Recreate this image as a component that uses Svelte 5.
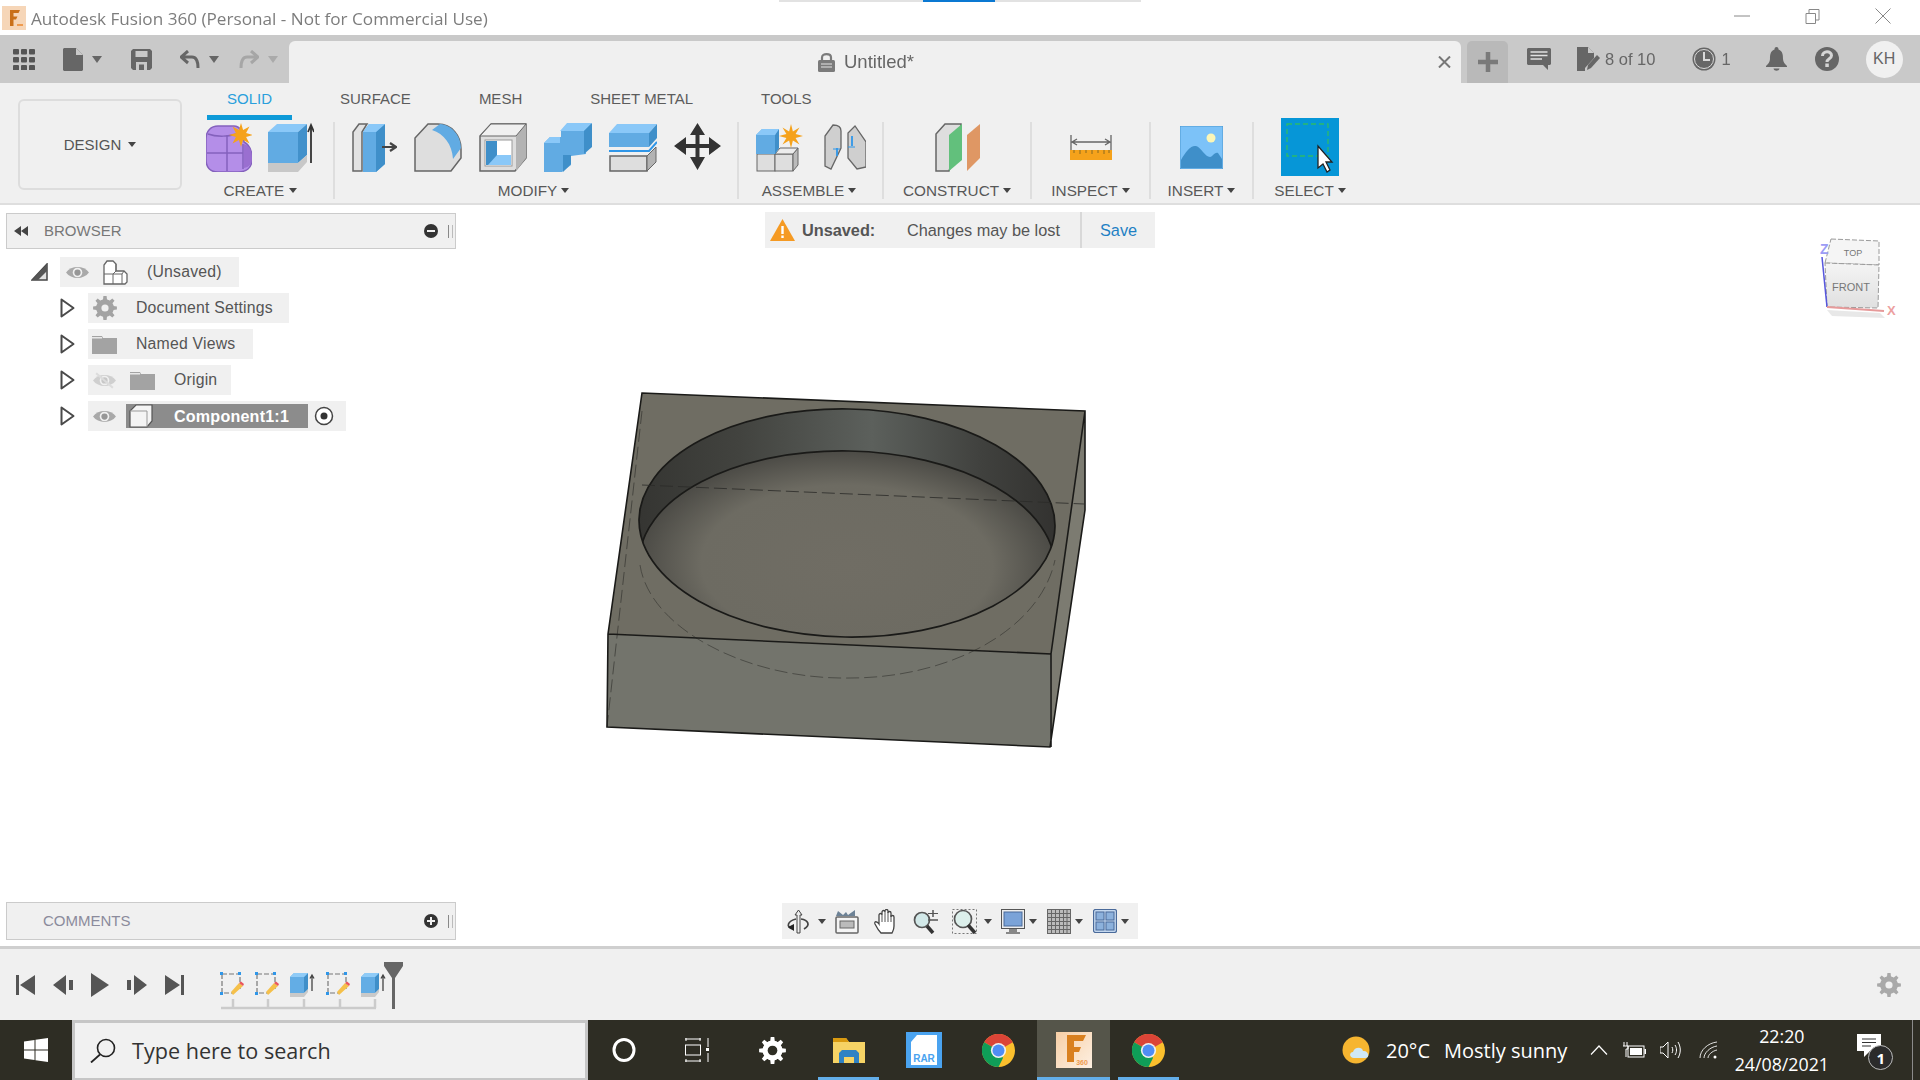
<script>
  const burst = (cx, cy, r1, r2, n) => {
    let pts = [];
    for (let i = 0; i < n * 2; i++) {
      const r = i % 2 ? r2 : r1;
      const a = (Math.PI * i) / n;
      pts.push(`${(cx + r * Math.sin(a)).toFixed(1)},${(cy - r * Math.cos(a)).toFixed(1)}`);
    }
    return pts.join(' ');
  };

  const gearPath = (c, r1, r2, teeth) => {
    let d = '';
    const step = (Math.PI * 2) / teeth;
    for (let i = 0; i < teeth; i++) {
      const a = i * step;
      const p = [
        [r1, a - step * 0.3],
        [r2, a - step * 0.17],
        [r2, a + step * 0.17],
        [r1, a + step * 0.3]
      ];
      p.forEach(([r, t], j) => {
        d += `${i === 0 && j === 0 ? 'M' : 'L'}${(c + r * Math.sin(t)).toFixed(1)} ${(c - r * Math.cos(t)).toFixed(1)}`;
      });
    }
    return d + 'Z';
  };

  const ribbonTabs = ['SOLID', 'SURFACE', 'MESH', 'SHEET METAL', 'TOOLS'];
  const taskSlots = ['cortana', 'taskview', 'settings', 'explorer', 'rar', 'chrome', 'fusion', 'chrome2'];
</script>

{#snippet gear(size, color)}
  <svg width={size} height={size} viewBox="0 0 24 24">
    <path d={gearPath(12, 8.6, 12, 8)} fill={color} />
    <circle cx="12" cy="12" r="8.8" fill={color} />
    <circle cx="12" cy="12" r="3.6" fill="#f0f0f0" />
  </svg>
{/snippet}

{#snippet eye(off)}
  <svg width="25" height="17" viewBox="0 0 24 16" class:faint={off}>
    <path d="M1 8C6 1 18 1 23 8C18 15 6 15 1 8Z" fill="#a9a9a9" />
    <circle cx="12" cy="8" r="4.6" fill="#f0f0f0" />
    <circle cx="12" cy="8" r="3" fill="#979797" />
    {#if off}<path d="M4 1L20 15" stroke="#c4c4c4" stroke-width="2" />{/if}
  </svg>
{/snippet}

{#snippet folder()}
  <svg width="25" height="20" viewBox="0 0 25 20">
    <path d="M0 2H10L11 4H25V20H0Z" fill="#a3a3a3" />
    <path d="M0 3H10V4.5H0Z" fill="#e8e8e8" />
  </svg>
{/snippet}

{#snippet chevron()}
  <svg class="chev" width="15" height="20" viewBox="0 0 15 20">
    <path d="M1.500 1.500L13.500 10L1.500 18.500Z" fill="#fff" stroke="#4a4a4a" stroke-width="2" stroke-linejoin="round" />
  </svg>
{/snippet}

{#snippet sketchIcon()}
  <svg width="24" height="24" viewBox="0 0 24 24">
    <path d="M2 2H20V17M2 2V21H13" fill="none" stroke="#777" stroke-width="1.2" stroke-dasharray="5 2" />
    <rect x="0" y="0" width="3" height="3" fill="#2f96e8" /><rect x="18" y="0" width="3" height="3" fill="#2f96e8" />
    <rect x="0" y="20" width="3" height="3" fill="#2f96e8" />
    <path d="M13 23L11 20L19 11L23 14Z" fill="#f5c04a" /><path d="M19 11L23 14L24 12L21 9.500Z" fill="#e9545c" />
  </svg>
{/snippet}

{#snippet extrudeSmall()}
  <svg width="25" height="25" viewBox="0 0 25 25">
    <path d="M0 5L4 1H18V18L14 21H0Z" fill="#63ade5" />
    <path d="M14 5L18 1V17L14 21Z" fill="#3f8fc9" /><path d="M0 5L4 1H18L14 5Z" fill="#8fcbf7" />
    <path d="M0 21H14L18 17V20L14 25H0Z" fill="#c9c9c9" />
    <path d="M22 19V4M20 6.500L22 3L24 6.500" fill="none" stroke="#444" stroke-width="1.300" />
  </svg>
{/snippet}

{#snippet chromeIcon()}
  <svg width="33" height="33" viewBox="0 0 33 33">
    <circle cx="16.500" cy="16.500" r="16.500" fill="#fbc02d" />
    <path d="M16.500 16.500L2.200 8.200A16.500 16.500 0 0 1 30.800 8.200Z" fill="#db4437" />
    <path d="M16.500 16.500L2.200 8.200A16.500 16.500 0 0 0 16.500 33L21 24Z" fill="#0f9d58" />
    <circle cx="16.500" cy="16.500" r="7.600" fill="#f1f1f1" />
    <circle cx="16.500" cy="16.500" r="6" fill="#4f8df5" />
  </svg>
{/snippet}

<div class="app">
  <div class="topstrip"><span></span></div>

  <header class="titlebar">
    <svg class="app-logo" width="24" height="24" viewBox="0 0 24 24">
      <rect width="24" height="24" fill="#f6d6b8" />
      <path d="M8 20V4H18L16.500 7H11.500V10.500H15.500L14 13.500H11.500V20Z" fill="#c9701a" />
      <rect x="15" y="18" width="6" height="2" fill="#ee9b50" />
    </svg>
    <span class="title">Autodesk Fusion 360 (Personal - Not for Commercial Use)</span>
    <div class="winctl">
      <svg width="16" height="16" viewBox="0 0 16 16"><path d="M0 8H16" stroke="#888" /></svg>
      <svg width="15" height="16" viewBox="0 0 15 16"><path d="M1 5.500H10.500V15.500H1ZM4 5V1.500H14V12H11" fill="none" stroke="#888" /></svg>
      <svg width="16" height="16" viewBox="0 0 16 16"><path d="M0.500 0.500L15.500 15.500M15.500 0.500L0.500 15.500" stroke="#888" /></svg>
    </div>
  </header>

  <div class="tabbar">
    <div class="qat">
      <svg width="22" height="21" viewBox="0 0 22 21" fill="#555">
        {#each [0, 8, 16] as y}{#each [0, 8, 16] as x}<rect {x} {y} width="6" height="5.500" rx="1" />{/each}{/each}
      </svg>
      <div class="tool">
        <svg width="20" height="23" viewBox="0 0 20 23"><path d="M1 0H13L20 7V22L19 23H1L0 22V1Z" fill="#666" /><path d="M13 0V7H20" fill="#c9c9c9" /></svg>
        <i class="caret big"></i>
      </div>
      <svg class="save" width="21" height="21" viewBox="0 0 21 21">
        <path d="M2 0H19L21 2V19L19 21H2L0 19V2Z" fill="#666" />
        <rect x="4.500" y="2" width="12" height="6" fill="#c9c9c9" /><path d="M5 21V13H16V21H13V15.500H8V21Z" fill="#c9c9c9" />
      </svg>
      <div class="tool">
        <svg width="20" height="18" viewBox="0 0 20 18"><path d="M8 1L1 7L8 13M2 7H12C16 7 18 10 18 18" fill="none" stroke="#666" stroke-width="3" /></svg>
        <i class="caret big"></i>
      </div>
      <div class="tool redo">
        <svg width="20" height="18" viewBox="0 0 20 18"><path d="M12 1L19 7L12 13M18 7H8C4 7 2 10 2 18" fill="none" stroke="#a6a6a6" stroke-width="3" /></svg>
        <i class="caret big light"></i>
      </div>
    </div>

    <div class="doc-tab">
      <svg width="17" height="20" viewBox="0 0 17 20">
        <path d="M4 9V5.500C4 1 13 1 13 5.500V9" fill="none" stroke="#7b7b7b" stroke-width="2.200" />
        <rect y="8" width="17" height="12" rx="1.500" fill="#7b7b7b" />
        <path d="M3 12H14M3 15H14" stroke="#e6e6e6" />
      </svg>
      <span class="doc-name">Untitled*</span>
      <svg class="doc-close" width="13" height="12" viewBox="0 0 13 12"><path d="M1 0.500L12 11.500M12 0.500L1 11.500" stroke="#777" stroke-width="2" /></svg>
    </div>

    <div class="account">
      <div class="new-tab">
        <svg width="20" height="20" viewBox="0 0 20 20"><path d="M10 0V20M0 10H20" stroke="#7a7a7a" stroke-width="4.500" /></svg>
      </div>
      <svg class="a-comment" width="24" height="22" viewBox="0 0 24 22">
        <path d="M1 0H23L24 1V16L23 17H21V22L16 17H1L0 16V1Z" fill="#666" />
        <path d="M3.500 4H20.500M3.500 7.500H20.500M3.500 11H15" stroke="#e0e0e0" stroke-width="1.500" />
      </svg>
      <svg class="a-doc" width="23" height="24" viewBox="0 0 23 24">
        <path d="M0 0H11L17 6V11L8 21V24H0Z" fill="#666" /><path d="M11 0V6H17" fill="#c9c9c9" />
        <path d="M10 23L11 18L20 8L23 11L14 21Z" fill="#666" />
      </svg>
      <span class="a-count">8 of 10</span>
      <svg class="a-clock" width="24" height="24" viewBox="0 0 24 24">
        <circle cx="12" cy="12" r="11.500" fill="#666" />
        <circle cx="12" cy="12" r="9.500" fill="none" stroke="#d8d8d8" />
        <path d="M12 5V13H18" fill="none" stroke="#d8d8d8" stroke-width="2" />
      </svg>
      <span class="a-one">1</span>
      <svg class="a-bell" width="21" height="24" viewBox="0 0 21 24">
        <path d="M10.500 0C12 0 12.500 1 12.500 2.500C17 4 17 9 17 12C17 15 19 17 21 19V20H0V19C2 17 4 15 4 12C4 9 4 4 8.500 2.500C8.500 1 9 0 10.500 0Z" fill="#666" />
        <path d="M7.500 21.500H13.500C13 24.500 8 24.500 7.500 21.500Z" fill="#666" />
      </svg>
      <svg class="a-help" width="24" height="24" viewBox="0 0 24 24">
        <circle cx="12" cy="12" r="12" fill="#666" />
        <path d="M7.500 9C7.500 3.500 16.500 3.500 16.500 8.500C16.500 12 12 11.500 12 15" fill="none" stroke="#d5d5d5" stroke-width="3" />
        <rect x="10.300" y="16.500" width="3.500" height="3.500" fill="#d5d5d5" />
      </svg>
      <div class="avatar">KH</div>
    </div>
  </div>

  <div class="ribbon">
    <button class="design">DESIGN <i class="caret"></i></button>
    <div class="ribbon-main">
      <nav class="tabs">
        {#each ribbonTabs as t, i}
          <span class="tab" class:active={i === 0}>{t}</span>
        {/each}
      </nav>
      <div class="groups">
        <section class="group g-create">
          <div class="icons">
            <svg width="46" height="50" viewBox="0 0 46 50">
              <path d="M12 4H28C34 4 37 9 38 20C44 23 46 28 46 37C46 46 40 50 32 50H12C4 50 0 46 0 37V17C0 9 5 4 12 4Z" fill="#b48ee8" stroke="#8461bd" stroke-width="1.500" />
              <path d="M2 12C10 15 24 15 33 11M21 13V49M1 31H37M37 22V47" fill="none" stroke="#8461bd" stroke-width="1.500" />
              <path d="M38 22C44 24 46 29 46 37C46 42 43 45 38 46Z" fill="#9a6fd0" />
              <polygon points={burst(35, 13, 12, 5.500, 8)} fill="#f5a21b" />
            </svg>
            <svg width="46" height="50" viewBox="0 0 46 50">
              <path d="M0 10L9 2H39L30 10Z" fill="#8ac8f8" /><rect y="10" width="30" height="31" fill="#61abe3" />
              <path d="M30 10L39 2V33L30 41Z" fill="#4291cb" />
              <path d="M0 41H30L39 33V40L30 50H0Z" fill="#c8c8c8" />
              <path d="M43 41V5M40 10L43 3L46 10" fill="none" stroke="#333" stroke-width="1.800" />
            </svg>
          </div>
          <div class="label">CREATE <i class="caret"></i></div>
        </section>

        <section class="group g-modify">
          <div class="icons">
            <svg width="45" height="50" viewBox="0 0 45 50">
              <path d="M1 49V10L7 2H15L10 10V49Z" fill="#e2e2e2" stroke="#666" stroke-width="1.500" />
              <path d="M11 10L17 2H33V42L24 50H11Z" fill="#61abe3" /><path d="M24 10L33 2V42L24 50Z" fill="#3f8fc9" />
              <path d="M11 10L17 2H33L24 10Z" fill="#8ac8f8" />
              <path d="M30 25H42M38 21L44 25L38 29" fill="none" stroke="#444" stroke-width="2.200" />
            </svg>
            <svg width="48" height="50" viewBox="0 0 48 50">
              <path d="M1 49V16L14 2H24C38 2 47 14 47 27V36L37 49Z" fill="#dedede" stroke="#666" stroke-width="1.500" />
              <path d="M18 8L26 2C38 3 47 14 47 26L39 37C38 22 30 12 18 8Z" fill="#61abe3" />
            </svg>
            <svg width="48" height="50" viewBox="0 0 48 50">
              <path d="M1 49V14L12 2H47V36L36 49Z" fill="#dedede" stroke="#666" stroke-width="1.500" />
              <path d="M37 14L47 2V36L37 49Z" fill="#b3b3b3" /><path d="M1 14L12 2H47L37 14Z" fill="#f0f0f0" stroke="#666" />
              <rect x="6" y="18" width="27" height="26" fill="#fff" stroke="#9a9a9a" />
              <path d="M7 19H18V33H32V43H7Z" fill="#3f8fc9" /><path d="M18 33H32V43H9Z" fill="#8ac8f8" />
            </svg>
            <svg width="48" height="50" viewBox="0 0 48 50">
              <path d="M0 21L6 15H17V9L23 2H48L42 8V32L27 34V43L18 50H0Z" fill="#61abe3" />
              <path d="M16 9L23 1H48L40 9Z" fill="#8ac8f8" /><path d="M0 21L6 15H16L16 21Z" fill="#8ac8f8" />
              <path d="M40 9L48 1V25L40 32Z" fill="#3f8fc9" /><path d="M19 33L27 33V42L19 50Z" fill="#3f8fc9" />
            </svg>
            <svg width="48" height="50" viewBox="0 0 48 50">
              <path d="M0 11L8 2H48L40 11Z" fill="#8ac8f8" /><rect y="11" width="40" height="14" fill="#61abe3" /><path d="M40 11L48 2V16L40 25Z" fill="#3f8fc9" />
              <path d="M0 29H40L48 20" fill="none" stroke="#2f96e8" stroke-width="2" />
              <path d="M1 34H38V49H1Z" fill="#dedede" stroke="#666" stroke-width="1.500" /><path d="M38 34L47 25V40L38 49Z" fill="#b3b3b3" stroke="#666" />
            </svg>
            <svg width="47" height="50" viewBox="0 0 47 50">
              <path d="M23.500 1L31 13H25.500V22H35V15L47 24L35 33V26H25.500V35H31L23.500 48L16 35H21.500V26H12V33L0 24L12 15V22H21.500V13H16Z" fill="#333" />
            </svg>
          </div>
          <div class="label mod">MODIFY <i class="caret"></i></div>
        </section>

        <section class="group g-assemble">
          <div class="icons">
            <svg width="47" height="50" viewBox="0 0 47 50">
              <rect x="1" y="32" width="18" height="17" fill="#dedede" stroke="#666" /><rect x="19" y="32" width="18" height="17" fill="#dedede" stroke="#666" />
              <path d="M37 32L42 26V43L37 49Z" fill="#bbb" stroke="#666" /><path d="M19 32L24 26H42L37 32Z" fill="#ececec" stroke="#666" />
              <path d="M0 13L6 7H23V26L19 32H0Z" fill="#61abe3" /><path d="M19 13L23 7V26L19 32Z" fill="#3f8fc9" /><path d="M0 13L6 7H23L19 13Z" fill="#8ac8f8" />
              <polygon points={burst(35, 14, 12, 5, 8)} fill="#f5a21b" />
            </svg>
            <svg width="42" height="50" viewBox="0 0 42 50">
              <path d="M1 44V14L9 3C14 3 17 5 17 9V26L7 47Z" fill="#cfcfcf" stroke="#666" stroke-width="1.300" />
              <path d="M24 26V11L31 4L42 20V45L33 47L24 36Z" fill="#cfcfcf" stroke="#666" stroke-width="1.300" />
              <path d="M13 26V34M28 14V24" stroke="#2f96e8" stroke-width="1.800" /><path d="M9 27H16M24 25H31" stroke="#2f96e8" />
            </svg>
          </div>
          <div class="label asm">ASSEMBLE <i class="caret"></i></div>
        </section>

        <section class="group g-construct">
          <div class="icons">
            <svg width="45" height="50" viewBox="0 0 45 50">
              <path d="M1 49V12L10 2H26V12L14 49Z" fill="#dedede" stroke="#666" stroke-width="1.500" />
              <path d="M14 49V13L27 2V38Z" fill="#62c07c" />
              <path d="M32 49V13L45 2V36Z" fill="#df9764" />
            </svg>
          </div>
          <div class="label">CONSTRUCT <i class="caret"></i></div>
        </section>

        <section class="group g-inspect">
          <div class="icons">
            <svg width="42" height="25" viewBox="0 0 42 25">
              <path d="M1 0V15M41 0V15M2 7H40M7 4L2 7L7 10M35 4L40 7L35 10" fill="none" stroke="#666" stroke-width="1.300" />
              <rect y="15" width="42" height="10" fill="#f5a21b" />
              <path d="M4 15V18M10 15V19M16 15V18M22 15V19M28 15V18M34 15V19M39 15V18" stroke="#8a6a20" />
            </svg>
          </div>
          <div class="label">INSPECT <i class="caret"></i></div>
        </section>

        <section class="group g-insert">
          <div class="icons">
            <svg width="43" height="43" viewBox="0 0 43 43">
              <rect width="43" height="43" fill="#7cc2f8" stroke="#4a97cf" />
              <circle cx="31" cy="12" r="4.500" fill="#fbf6b7" />
              <path d="M1 34C6 25 11 19 16 20C21 21 25 31 30 31C33 31 34 26 38 27L42 33V42H1Z" fill="#3f8fc9" />
            </svg>
          </div>
          <div class="label">INSERT <i class="caret"></i></div>
        </section>

        <section class="group g-select">
          <div class="icons">
            <svg width="58" height="58" viewBox="0 0 58 58">
              <rect width="58" height="58" fill="#0696d7" />
              <rect x="6" y="6" width="41" height="32" fill="none" stroke="#2dbb6a" stroke-width="1.300" stroke-dasharray="5 3" />
              <path d="M37 28V50L42 46L46 54L49 52L45 44H51Z" fill="#fff" stroke="#222" stroke-width="1.300" />
            </svg>
          </div>
          <div class="label">SELECT <i class="caret"></i></div>
        </section>
      </div>
    </div>
  </div>

  <main class="canvas">
    <aside class="side">
      <div class="panel">
        <svg width="14" height="10" viewBox="0 0 14 10"><path d="M7 0V10L0 5ZM14 0V10L7 5Z" fill="#444" /></svg>
        <span class="panel-title">BROWSER</span>
        <svg class="panel-btn" width="14" height="14" viewBox="0 0 14 14"><circle cx="7" cy="7" r="7" fill="#333" /><path d="M3 7H11" stroke="#f0f0f0" stroke-width="2" /></svg>
        <i class="grip"></i>
      </div>

      <div class="tree">
        <div class="row root">
          <svg class="open" width="17" height="18" viewBox="0 0 17 18"><path d="M1 17L16 1V17Z" fill="#e0e0e0" stroke="#444" stroke-width="1.500" /><path d="M1 17L16 1V8L7 17Z" fill="#555" /></svg>
          <div class="node n-root">
            {@render eye(false)}
            <svg width="25" height="25" viewBox="0 0 25 25">
              <path d="M1 24V5L4 1H10L13 4V11H21L24 14V22L22 24Z" fill="#fff" stroke="#666" stroke-width="1.300" />
              <path d="M13 11L10 14H1M10 14V24M13 11V4L10 1M21 11L19 14H10M19 14V24" fill="none" stroke="#666" />
            </svg>
            <span class="n-text">(Unsaved)</span>
          </div>
        </div>
        <div class="row">
          {@render chevron()}
          <div class="node n-doc">
            {@render gear(24, '#a3a3a3')}
            <span class="n-text">Document Settings</span>
          </div>
        </div>
        <div class="row">
          {@render chevron()}
          <div class="node n-views">
            {@render folder()}
            <span class="n-text">Named Views</span>
          </div>
        </div>
        <div class="row">
          {@render chevron()}
          <div class="node n-origin">
            {@render eye(true)}
            {@render folder()}
            <span class="n-text">Origin</span>
          </div>
        </div>
        <div class="row">
          {@render chevron()}
          <div class="node n-comp">
            {@render eye(false)}
            <div class="selected">
              <svg width="24" height="24" viewBox="0 0 24 24"><path d="M1 23V7L7 1H23V17L18 23Z" fill="#f4f4f4" stroke="#555" stroke-width="1.200" /><path d="M1 7H18V23" fill="none" stroke="#999" /></svg>
              <span>Component1:1</span>
            </div>
            <svg class="radio" width="20" height="20" viewBox="0 0 20 20"><circle cx="10" cy="10" r="8.500" fill="#fff" stroke="#444" stroke-width="1.500" /><circle cx="10" cy="10" r="3.500" fill="#333" /></svg>
          </div>
        </div>
      </div>

      <div class="panel comments">
        <span class="panel-title">COMMENTS</span>
        <svg class="panel-btn" width="14" height="14" viewBox="0 0 14 14"><circle cx="7" cy="7" r="7" fill="#333" /><path d="M3 7H11M7 3V11" stroke="#f0f0f0" stroke-width="2" /></svg>
        <i class="grip"></i>
      </div>
    </aside>

    <div class="banner">
      <svg width="25" height="22" viewBox="0 0 25 22"><path d="M12.500 0L25 22H0Z" fill="#f59a23" /><path d="M12.500 7V15M12.500 16.500V19" stroke="#fff" stroke-width="2.400" /></svg>
      <b>Unsaved:</b>
      <span class="lost">Changes may be lost</span>
      <span class="save-link">Save</span>
    </div>

    <svg class="model" width="500" height="375" viewBox="600 385 500 375">
      <defs>
        <clipPath id="rim"><ellipse cx="847" cy="523" rx="208" ry="114" transform="rotate(1 847 523)" /></clipPath>
        <linearGradient id="wall" x1="0" x2="1" y1="0" y2="0">
          <stop offset="0" stop-color="#343431" /><stop offset=".25" stop-color="#42433f" /><stop offset=".55" stop-color="#5c605c" /><stop offset=".8" stop-color="#40413e" /><stop offset="1" stop-color="#302f2d" />
        </linearGradient>
        <radialGradient id="floor" cx=".5" cy=".5" r=".5">
          <stop offset="0" stop-color="#706d64" /><stop offset=".7" stop-color="#6d6b62" /><stop offset="1" stop-color="#4c4b46" />
        </radialGradient>
      </defs>
      <path d="M642 393L1085 411L1051 654L608 634Z" fill="#6f6d63" />
      <path d="M608 634L1051 654L1050 747L607 727Z" fill="#73746c" />
      <path d="M1085 411V510L1050 747L1051 654Z" fill="#7c7b71" />
      <g clip-path="url(#rim)">
        <rect x="630" y="400" width="440" height="240" fill="url(#wall)" />
        <ellipse cx="847" cy="565" rx="208" ry="114" transform="rotate(1 847 565)" fill="url(#floor)" stroke="#1a1a18" stroke-width="1.700" />
      </g>
      <ellipse cx="847" cy="523" rx="208" ry="114" transform="rotate(1 847 523)" fill="none" stroke="#1a1a18" stroke-width="1.700" />
      <g fill="none" stroke="#2b2b28" stroke-dasharray="13 5">
        <path d="M642 485L1084 504" stroke-opacity=".8" />
        <path d="M642 411L607 727" stroke-opacity=".6" />
        <path d="M640 565C650 630 750 680 850 678C950 678 1040 630 1055 560" stroke-opacity=".55" />
      </g>
      <path d="M642 393L1085 411V510L1050 747L607 727L608 634ZM608 634L1051 654V747M642 393L608 634M1085 411L1051 654" fill="none" stroke="#1a1a18" stroke-width="1.600" />
    </svg>

    <div class="cube">
      <svg width="100" height="90" viewBox="1815 235 100 90">
        <defs>
          <linearGradient id="cf" x1="0" x2="0" y1="0" y2="1"><stop offset="0" stop-color="#f4f4f4" /><stop offset="1" stop-color="#e0e0e0" /></linearGradient>
        </defs>
        <path d="M1827 310L1880 313L1885 318L1832 316Z" fill="#d8d8d8" opacity=".6" />
        <path d="M1831 239L1879 241V265L1825 263Z" fill="#f5f5f5" stroke="#9a9a9a" stroke-dasharray="5 2" />
        <path d="M1825 263L1879 265L1878 308L1827 307Z" fill="url(#cf)" stroke="#9a9a9a" stroke-dasharray="5 2" />
        <text x="1853" y="256" class="c-top">TOP</text>
        <text x="1851" y="291" class="c-front">FRONT</text>
        <path d="M1822 257L1827 307" stroke="#5656dd" stroke-width="1.500" />
        <path d="M1827 307L1884 311" stroke="#e69a9a" stroke-width="2" />
        <text x="1820" y="254" class="c-z">Z</text>
        <text x="1887" y="315" class="c-x">X</text>
      </svg>
    </div>

    <div class="viewbar">
      <div class="tool">
        <svg width="25" height="25" viewBox="0 0 25 25"><path d="M12.500 1L9 6H11V24H14V6H16Z" fill="#eee" stroke="#444" /><path d="M10 10C2 12 -1 18 7 20M15 10C22 11 25 16 18 20" fill="none" stroke="#444" stroke-width="1.700" /><path d="M2 18L8 15V22Z" fill="#222" /></svg>
        <i class="caret"></i>
      </div>
      <svg class="vb-look" width="24" height="25" viewBox="0 0 24 25"><rect x="1" y="8" width="22" height="16" rx="1" fill="#f4f4f4" stroke="#666" stroke-width="1.500" /><rect x="5" y="12" width="14" height="7" fill="#bbb" stroke="#666" /><path d="M1 7L3 2L8 6L11 3L13 6L20 1V7Z" fill="#6d8296" /></svg>
      <svg class="vb-hand" width="25" height="25" viewBox="0 0 25 25"><path d="M7 24C4 21 3 19 1 15C0 12 3 12 5 15V6C5 4 8 4 8 6V3C8 1 11 1 11 3V2C11 0 14 0 14 2V4C14 2 17 2 17 4V8C17 6 20 6 20 8V17C20 21 19 22 18 24Z" fill="#fff" stroke="#444" stroke-width="1.300" /><path d="M8 6V13M11 3V13M14 3V13M17 6V13" stroke="#555" /></svg>
      <svg class="vb-zoom" width="25" height="25" viewBox="0 0 25 25"><circle cx="9" cy="11" r="7.500" fill="#d2e8e8" stroke="#555" stroke-width="1.700" /><path d="M14 17L20 24" stroke="#333" stroke-width="3.500" /><path d="M15 5H25M20 0V10" stroke="#555" stroke-width="1.500" transform="translate(0 1) scale(1 .7)" /><path d="M15 11H25" stroke="#555" stroke-width="1.500" /></svg>
      <div class="tool vb-fit">
        <svg width="25" height="25" viewBox="0 0 25 25"><rect x=".5" y=".5" width="24" height="24" fill="none" stroke="#777" stroke-dasharray="2 2" /><circle cx="11" cy="10" r="8.500" fill="#dcefeb" stroke="#555" stroke-width="1.700" /><path d="M16 16L23 24" stroke="#333" stroke-width="3.500" /></svg>
        <i class="caret"></i>
      </div>
      <div class="tool vb-disp">
        <svg width="24" height="25" viewBox="0 0 24 25"><rect x=".5" y=".5" width="23" height="19" fill="#eee" stroke="#555" /><rect x="3" y="3" width="18" height="14" fill="#7ba3d8" stroke="#4a6a9a" /><path d="M8 20H16V23H19V25H5V23H8Z" fill="#888" /></svg>
        <i class="caret"></i>
      </div>
      <div class="tool vb-grid">
        <svg width="24" height="25" viewBox="0 0 24 25"><rect x=".5" y=".5" width="23" height="24" fill="#bbb" stroke="#666" /><path d="M4.500 0V25M8.500 0V25M12.500 0V25M16.500 0V25M20 0V25M0 4.500H24M0 8.500H24M0 12.500H24M0 16.500H24M0 20.500H24" stroke="#666" /></svg>
        <i class="caret"></i>
      </div>
      <div class="tool vb-multi">
        <svg width="24" height="24" viewBox="0 0 24 24"><rect x=".5" y=".5" width="23" height="23" rx="2" fill="#c3d7ee" stroke="#4a6a9a" stroke-width="1.200" /><rect x="3" y="3" width="8" height="8" fill="#8cb1dc" stroke="#4a6a9a" /><rect x="13" y="3" width="8" height="8" fill="#8cb1dc" stroke="#4a6a9a" /><rect x="3" y="13" width="8" height="8" fill="#8cb1dc" stroke="#4a6a9a" /><rect x="13" y="13" width="8" height="8" fill="#8cb1dc" stroke="#4a6a9a" /></svg>
        <i class="caret"></i>
      </div>
    </div>
  </main>

  <footer class="timeline">
    <div class="transport">
      <svg width="19" height="20" viewBox="0 0 19 20"><path d="M0 0H3V20H0ZM19 0V20L4 10Z" fill="#555" /></svg>
      <svg width="20" height="20" viewBox="0 0 20 20"><path d="M13 0V20L0 10ZM16 5H20V15H16Z" fill="#555" /></svg>
      <svg width="18" height="24" viewBox="0 0 18 24"><path d="M0 0L18 12L0 24Z" fill="#555" /></svg>
      <svg width="20" height="20" viewBox="0 0 20 20"><path d="M7 0V20L20 10ZM0 5H4V15H0Z" fill="#555" /></svg>
      <svg width="19" height="20" viewBox="0 0 19 20"><path d="M16 0H19V20H16ZM0 0V20L15 10Z" fill="#555" /></svg>
    </div>
    <div class="steps">
      {@render sketchIcon()}
      {@render sketchIcon()}
      {@render extrudeSmall()}
      {@render sketchIcon()}
      {@render extrudeSmall()}
      <svg class="steps-line" width="160" height="12" viewBox="0 0 160 12"><path d="M1 10H156M13 1V10M48 1V10M84 1V10M120 1V10M155 1V10" fill="none" stroke="#cbcbcb" stroke-width="2.500" /></svg>
      <svg class="marker" width="19" height="47" viewBox="0 0 19 47"><path d="M0 0H19V4L11 16V47H8V16L0 4Z" fill="#666" /></svg>
    </div>
    <div class="tl-gear">{@render gear(24, '#a9a9a9')}</div>
  </footer>

  <div class="taskbar">
    <div class="start">
      <svg width="24" height="24" viewBox="0 0 24 24" fill="#fff"><path d="M0 3.500L10.500 2V11.500H0ZM11.500 1.800L24 0V11.500H11.500ZM0 12.500H10.500V22L0 20.500ZM11.500 12.500H24V24L11.500 22.200Z" /></svg>
    </div>
    <div class="search">
      <svg width="26" height="25" viewBox="0 0 26 25"><circle cx="16" cy="10" r="8.500" fill="none" stroke="#222" stroke-width="1.600" /><path d="M10 16.500L1 24.500" stroke="#222" stroke-width="1.800" /></svg>
      <span>Type here to search</span>
    </div>

    {#each taskSlots as slot}
      <div class="slot {slot}">
        {#if slot === 'cortana'}
          <svg width="24" height="24" viewBox="0 0 24 24"><ellipse cx="12" cy="12" rx="10" ry="10.500" fill="none" stroke="#fff" stroke-width="3" /></svg>
        {:else if slot === 'taskview'}
          <svg width="24" height="24" viewBox="0 0 24 24"><path d="M0 1H16M0 23H16M1 0V3M15 0V3M1 21V24M15 21V24" fill="none" stroke="#fff" /><rect x=".5" y="7" width="15" height="10" fill="none" stroke="#fff" /><path d="M23 0V9M23 15V24" stroke="#fff" /><rect x="21" y="10" width="3" height="3" fill="#fff" /></svg>
        {:else if slot === 'settings'}
          <svg width="27" height="27" viewBox="0 0 24 24"><path d={gearPath(12, 8.600, 12, 8)} fill="#fff" /><circle cx="12" cy="12" r="8.800" fill="#fff" /><circle cx="12" cy="12" r="4.300" fill="#2e2d24" /></svg>
        {:else if slot === 'explorer'}
          <svg width="32" height="26" viewBox="0 0 32 26"><path d="M0 1H13L16 5H32V26H0Z" fill="#f6d365" /><path d="M0 1H13L16 5H0Z" fill="#d99a10" /><path d="M6 26V16L9 13H23L26 16V26H21V20H11V26Z" fill="#2f82c4" /></svg>
        {:else if slot === 'rar'}
          <svg width="36" height="36" viewBox="0 0 36 36"><rect width="36" height="36" fill="#4aa3f0" /><path d="M11 3H31V33H5V10Z" fill="#fff" /><text x="18" y="30" class="rar-text">RAR</text></svg>
        {:else if slot === 'chrome' || slot === 'chrome2'}
          {@render chromeIcon()}
        {:else if slot === 'fusion'}
          <svg width="36" height="36" viewBox="0 0 36 36">
            <defs><linearGradient id="fl" x1="0" x2="1" y1="0" y2="1"><stop offset="0" stop-color="#f7cfa6" /><stop offset="1" stop-color="#fdf0e2" /></linearGradient></defs>
            <rect width="36" height="36" fill="url(#fl)" /><path d="M11 3H30L27 9H18V15H25L23 20H18V30H11Z" fill="#d9801f" /><text x="26" y="33" class="f-text">360</text>
          </svg>
        {/if}
      </div>
    {/each}

    <div class="tray">
      <svg class="t-weather" width="30" height="28" viewBox="0 0 30 28">
        <circle cx="14" cy="14" r="13.500" fill="#f6b530" />
        <path d="M12 22C7 22 7 16 11 16C12 11 20 10 21 15C26 14 29 22 23 22Z" fill="#cfe8f7" />
      </svg>
      <span class="t-temp">20°C</span>
      <span class="t-cond">Mostly sunny</span>
      <svg class="t-chev" width="18" height="10" viewBox="0 0 18 10"><path d="M1 9.500L9 1L17 9.500" fill="none" stroke="#fff" stroke-width="1.200" /></svg>
      <svg class="t-batt" width="23" height="16" viewBox="0 0 23 16"><path d="M1 0V4M4 0V4M0 4H5V7H3V15" fill="none" stroke="#fff" /><rect x="5" y="4" width="16" height="11" fill="none" stroke="#fff" /><rect x="7" y="6" width="12" height="7" fill="#fff" /><rect x="21.500" y="7" width="1.500" height="5" fill="#fff" /></svg>
      <svg class="t-sound" width="22" height="18" viewBox="0 0 22 18"><path d="M0 6H3L8 1V17L3 12H0Z" fill="none" stroke="#fff" /><path d="M12 6C13 8 13 10 12 12M15 4C17 7 17 11 15 14M18 1C21 6 21 12 18 17" fill="none" stroke="#fff" /></svg>
      <svg class="t-wifi" width="19" height="18" viewBox="0 0 19 18"><path d="M1 17C1 9 9 2 18 1M5 17C5 12 11 6 18 5M9 17C9 14 13 10 18 9" fill="none" stroke="#fff" stroke-opacity=".85" /><circle cx="16" cy="16" r="1.500" fill="#fff" /></svg>
      <div class="t-clock"><span>22:20</span><span>24/08/2021</span></div>
      <div class="t-notify">
        <svg width="24" height="24" viewBox="0 0 24 24"><path d="M0 0H24V17H13L7 23V17H0Z" fill="#fff" /><path d="M5 5H19M5 8.500H19M5 12H14" stroke="#333" stroke-width="1.200" /></svg>
        <span class="badge">1</span>
      </div>
    </div>
    <i class="edge"></i>
  </div>
</div>

<style>
  :global(body) {
    margin: 0;
    background: #fff;
    overflow: hidden;
  }

  .app {
    width: 1920px;
    height: 1080px;
    display: flex;
    flex-direction: column;
    position: relative;
    overflow: hidden;
    font-family: "Liberation Sans", Arial, sans-serif;
    color: #666;
    filter: blur(0.35px);
  }

  svg { display: block; flex: none; }

  .caret {
    display: inline-block;
    width: 0;
    height: 0;
    border-left: 4px solid transparent;
    border-right: 4px solid transparent;
    border-top: 5px solid #444;
    vertical-align: 3px;
  }
  .caret.big { border-left-width: 5px; border-right-width: 5px; border-top-width: 7px; border-top-color: #666; }
  .caret.light { border-top-color: #aaa; }

  .tool { display: flex; align-items: center; gap: 9px; }

  /* window chrome */
  .topstrip {
    position: absolute;
    left: 779px;
    top: 0;
    width: 362px;
    height: 2px;
    background: #e2e2e2;
  }
  .topstrip span {
    display: block;
    width: 72px;
    height: 2px;
    margin-left: 144px;
    background: #0a78d2;
  }

  .titlebar {
    height: 35px;
    display: flex;
    align-items: center;
    padding-left: 2px;
    flex: none;
  }
  .title {
    margin-left: 5px;
    font-family: "Open Sans", sans-serif;
    font-size: 17.15px;
    color: #7d7d7d;
    white-space: nowrap;
    margin-top: 2px;
  }
  .winctl {
    margin-left: auto;
    display: flex;
    align-items: center;
    gap: 55px;
    padding-right: 29px;
    margin-top: -3px;
  }

  .tabbar {
    height: 48px;
    flex: none;
    display: flex;
    background: #c9c9c9;
  }
  .qat {
    width: 289px;
    flex: none;
    box-sizing: border-box;
    padding-left: 13px;
    display: flex;
    align-items: center;
    gap: 28px;
  }
  .qat .save { margin-left: 1px; }
  .qat .redo { margin-left: -8px; }

  .doc-tab {
    flex: 1;
    margin-top: 6px;
    background: #f0f0f0;
    border-radius: 6px 6px 0 0;
    display: flex;
    align-items: center;
    padding: 0 10px 0 529px;
  }
  .doc-name {
    margin-left: 9px;
    font-size: 18.5px;
    color: #666;
  }
  .doc-close { margin-left: auto; }

  .account {
    width: 459px;
    flex: none;
    display: flex;
    align-items: center;
  }
  .new-tab {
    align-self: flex-end;
    width: 41px;
    height: 42px;
    margin-left: 6px;
    background: #b9b9b9;
    border-radius: 5px 5px 0 0;
    display: flex;
    align-items: center;
    justify-content: center;
  }
  .a-comment { margin-left: 19px; }
  .a-doc { margin-left: 26px; }
  .a-count { margin-left: 5px; font-size: 16.5px; white-space: nowrap; }
  .a-clock { margin-left: 37px; }
  .a-one { margin-left: 5px; font-size: 16.5px; }
  .a-bell { margin-left: 35px; }
  .a-help { margin-left: 28px; }
  .avatar {
    margin-left: 27px;
    width: 37px;
    height: 37px;
    border-radius: 50%;
    background: #f0f0f0;
    display: flex;
    align-items: center;
    justify-content: center;
    font-size: 16px;
  }

  /* ribbon */
  .ribbon {
    height: 122px;
    box-sizing: border-box;
    flex: none;
    display: flex;
    background: #f0f0f0;
    border-bottom: 2px solid #dedede;
    padding-left: 18px;
  }
  .design {
    width: 164px;
    height: 91px;
    margin-top: 16px;
    background: #f0f0f0;
    border: 2px solid #dddddd;
    border-radius: 6px;
    font: 15px "Liberation Sans", sans-serif;
    color: #555;
    display: flex;
    align-items: center;
    justify-content: center;
    gap: 7px;
    padding: 0;
  }
  .design .caret { vertical-align: 0; }
  .ribbon-main { margin-left: 5px; }
  .tabs {
    height: 37px;
    display: flex;
    gap: 28px;
    padding-left: 20px;
  }
  .tab {
    padding: 0 20px;
    line-height: 32px;
    height: 32px;
    font-size: 15px;
    color: #5c5c5c;
    white-space: nowrap;
  }
  .tab.active {
    color: #2a9fdc;
    border-bottom: 5px solid #0e9ad8;
  }
  .groups { display: flex; }
  .group {
    height: 77px;
    margin-top: 2px;
    box-sizing: border-box;
    border-right: 2px solid #dedede;
    display: flex;
    flex-direction: column;
    align-items: center;
  }
  .group:last-child { border-right: 0; }
  .icons {
    height: 50px;
    flex: none;
    display: flex;
    align-items: center;
    gap: 17px;
  }
  .label {
    margin-top: 9px;
    height: 18px;
    font-size: 15.3px;
    line-height: 20px;
    color: #585858;
    white-space: nowrap;
  }
  .label.mod { padding-right: 5px; }
  .label.asm { padding-right: 3px; }
  .g-create { width: 148px; }
  .g-create .icons { gap: 16px; }
  .g-modify { width: 404px; }
  .g-assemble { width: 145px; }
  .g-assemble .icons { gap: 21px; }
  .g-construct { width: 148px; }
  .g-inspect { width: 119px; }
  .g-insert { width: 103px; }
  .g-select { width: 112px; }

  /* main canvas */
  .canvas {
    flex: 1;
    position: relative;
    background: #fff;
    min-height: 0;
  }
  .side {
    width: 450px;
    height: 100%;
    margin-left: 6px;
    box-sizing: border-box;
    padding: 8px 0 6px;
    display: flex;
    flex-direction: column;
  }
  .panel {
    height: 36px;
    box-sizing: border-box;
    flex: none;
    background: #f0f0f0;
    border: 1px solid #cbcbcb;
    display: flex;
    align-items: center;
    padding: 0 2px 0 7px;
  }
  .panel-title {
    margin-left: 16px;
    font-size: 15px;
    color: #777;
    margin-bottom: 2px;
  }
  .panel-btn { margin-left: auto; }
  .grip {
    width: 3px;
    height: 13px;
    margin-left: 10px;
    border-left: 1px solid #888;
    border-right: 1px solid #bbb;
  }
  .comments { margin-top: auto; height: 38px; padding-left: 14px; }
  .comments .panel-title { margin-left: 22px; color: #8b8b9c; }

  .tree {
    padding-top: 8px;
    display: flex;
    flex-direction: column;
    gap: 6px;
  }
  .row {
    height: 30px;
    display: flex;
    align-items: center;
    margin-left: 54px;
  }
  .row.root { margin-left: 25px; }
  .chev { margin-right: 13px; }
  .open { margin-right: 12px; }
  .node {
    height: 30px;
    background: #f0f0f0;
    display: flex;
    align-items: center;
    box-sizing: border-box;
    font-size: 15.8px;
    color: #555;
    white-space: nowrap;
  }
  .n-text { letter-spacing: 0.2px; }
  .n-root { width: 179px; padding-left: 5px; }
  .n-root svg:nth-child(2) { margin-left: 13px; }
  .n-root .n-text { margin-left: 19px; }
  .n-doc { width: 201px; padding-left: 5px; }
  .n-doc .n-text { margin-left: 19px; }
  .n-views { width: 165px; padding-left: 4px; }
  .n-views .n-text { margin-left: 19px; }
  .n-origin { width: 143px; padding-left: 4px; }
  .n-origin svg:nth-child(2) { margin-left: 13px; }
  .n-origin .n-text { margin-left: 19px; }
  .n-comp { width: 258px; padding-left: 4px; }
  .faint { opacity: 0.45; }
  .selected {
    margin-left: 9px;
    width: 182px;
    height: 24px;
    background: #8c8c8c;
    display: flex;
    align-items: center;
    color: #fff;
    font-weight: bold;
    font-size: 16.1px;
    letter-spacing: 0.2px;
  }
  .selected svg { margin-left: 3px; }
  .selected span { margin-left: 21px; }
  .radio { margin-left: 6px; }

  .banner {
    position: absolute;
    left: 765px;
    top: 7px;
    width: 390px;
    height: 36px;
    box-sizing: border-box;
    background: #f0f0f0;
    display: flex;
    align-items: center;
    padding-left: 5px;
    font-size: 16.3px;
    color: #555;
    white-space: nowrap;
  }
  .banner b { margin-left: 7px; width: 105px; padding-top: 1px; }
  .lost { width: 173px; padding-top: 1px; }
  .save-link {
    align-self: stretch;
    border-left: 2px solid #d8d8d8;
    padding-left: 18px;
    line-height: 37px;
    color: #1f80c4;
  }

  .model {
    position: absolute;
    left: 600px;
    top: 180px;
  }
  .cube {
    position: absolute;
    left: 1815px;
    top: 30px;
  }
  .c-top { font: 9px "Liberation Sans", sans-serif; fill: #777; text-anchor: middle; }
  .c-front { font: 11px "Liberation Sans", sans-serif; fill: #777; text-anchor: middle; }
  .c-z { font: bold 14px "Liberation Sans", sans-serif; fill: #9c9cf5; }
  .c-x { font: bold 13px "Liberation Sans", sans-serif; fill: #eca0a0; }

  .viewbar {
    position: absolute;
    left: 782px;
    bottom: 7px;
    width: 356px;
    height: 36px;
    box-sizing: border-box;
    background: #f0f0f0;
    display: flex;
    align-items: center;
    padding-left: 4px;
  }
  .viewbar .tool { gap: 7px; }
  .vb-look { margin-left: 9px; }
  .vb-hand { margin-left: 15px; }
  .vb-zoom { margin-left: 14px; }
  .vb-fit { margin-left: 14px; }
  .vb-disp { margin-left: 9px; gap: 4px !important; }
  .vb-grid { margin-left: 10px; gap: 4px !important; }
  .vb-multi { margin-left: 10px; gap: 4px !important; }

  /* timeline */
  .timeline {
    height: 74px;
    box-sizing: border-box;
    flex: none;
    background: #f0f0f0;
    border-top: 3px solid #cfcfcf;
    display: flex;
    position: relative;
    padding-left: 16px;
  }
  .transport {
    display: flex;
    align-items: center;
    gap: 18px;
    height: 71px;
  }
  .steps {
    display: flex;
    gap: 11px;
    margin-left: 36px;
    padding-top: 23px;
    position: relative;
    height: 25px;
  }
  .steps-line {
    position: absolute;
    left: 0;
    top: 49px;
  }
  .marker {
    position: absolute;
    left: 164px;
    top: 13px;
  }
  .tl-gear {
    position: absolute;
    right: 19px;
    top: 24px;
  }
  .tl-gear :global(circle:last-child) { fill: #f0f0f0; }

  /* taskbar */
  .taskbar {
    height: 60px;
    flex: none;
    background: #2e2d24;
    display: flex;
    align-items: stretch;
    position: relative;
  }
  .start {
    width: 72px;
    display: flex;
    align-items: center;
    justify-content: center;
  }
  .search {
    width: 516px;
    margin-right: -2px;
    box-sizing: border-box;
    background: #f1f1f1;
    border: 3px solid #c6c6c6;
    border-bottom-width: 2px;
    display: flex;
    align-items: center;
    padding-left: 15px;
    font-family: "Open Sans", sans-serif;
    font-size: 21.6px;
    color: #333;
  }
  .search span { margin-left: 16px; }
  .slot {
    width: 75px;
    box-sizing: border-box;
    display: flex;
    align-items: center;
    justify-content: center;
    flex: none;
    position: relative;
  }
  .slot.taskview svg, .slot.settings svg { margin-right: 3px; }
  .slot.explorer::after, .slot.fusion::after, .slot.chrome2::after {
    content: "";
    position: absolute;
    left: 7px;
    right: 7px;
    bottom: 0;
    height: 3px;
    background: #63aee9;
  }
  .slot.fusion::after { left: 0; right: 0; }
  .slot.fusion { background: #55554a; width: 73px; margin: 0 1px; }
  .rar-text { font: bold 10px "Liberation Sans", sans-serif; fill: #4aa3f0; text-anchor: middle; }
  .f-text { font: bold 7px "Liberation Sans", sans-serif; fill: #ee9b50; text-anchor: middle; }

  .tray {
    flex: 1;
    display: flex;
    align-items: center;
    padding-left: 156px;
    color: #fff;
    font-family: "Open Sans", sans-serif;
    white-space: nowrap;
  }
  .t-temp { margin-left: 14px; font-size: 20px; }
  .t-cond { margin-left: 14px; font-size: 20px; }
  .t-chev { margin-left: 23px; }
  .t-batt { margin-left: 15px; }
  .t-sound { margin-left: 14px; }
  .t-wifi { margin-left: 17px; }
  .t-clock {
    margin-left: 17px;
    width: 93px;
    display: flex;
    flex-direction: column;
    align-items: center;
    gap: 4px;
    font-size: 17.8px;
    line-height: 24px;
  }
  .t-notify {
    margin-left: 29px;
    position: relative;
    margin-top: -8px;
  }
  .badge {
    position: absolute;
    left: 11px;
    top: 11px;
    width: 23px;
    height: 23px;
    border-radius: 50%;
    background: #2b2b2b;
    border: 1px solid #bbb;
    display: flex;
    align-items: center;
    justify-content: center;
    font-size: 15px;
    font-weight: bold;
  }
  .edge {
    position: absolute;
    right: 7px;
    top: 0;
    bottom: 0;
    width: 1px;
    background: #8b8b8b;
  }
</style>
